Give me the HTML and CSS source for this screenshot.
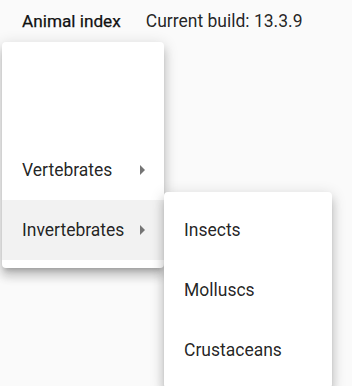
FILE: index.html
```html
<!DOCTYPE html>
<html>
<head>
<meta charset="utf-8">
<link rel="stylesheet" href="styles.css">
</head>
<body>
<header class="bar">
  <span class="title">Animal index</span>
  <span class="build">Current build: 13.3.9</span>
</header>
<div class="menu">
  <div class="spacer"></div>
  <div class="item"><span>Vertebrates</span><span class="arrow"></span></div>
  <div class="item active"><span>Invertebrates</span><span class="arrow"></span>
    <div class="menu sub">
      <div class="item">Insects</div>
      <div class="item">Molluscs</div>
      <div class="item">Crustaceans</div>
    </div>
  </div>
</div>
</body>
</html>
```
FILE: styles.css
```css
html, body {
  margin: 0;
  padding: 0;
  background: #fafafa;
  font-family: Roboto, "Liberation Sans", sans-serif;
  font-size: 17.5px;
  color: rgba(0,0,0,0.87);
  overflow: hidden;
  height: 386px;
}
.bar {
  display: flex;
  align-items: center;
  gap: 25px;
  height: 42px;
  padding-left: 22px;
}
.title {
  font-weight: 400;
  font-size: 17.2px;
  color: #111;
  -webkit-text-stroke: 0.25px #111;
}
.menu {
  margin-left: 2px;
  width: 162px;
  background: #fff;
  border-radius: 4px;
  padding: 8px 0;
  box-shadow: 0 5px 5px -3px rgba(0,0,0,0.2), 0 8px 10px 1px rgba(0,0,0,0.14), 0 3px 14px 2px rgba(0,0,0,0.12);
}
.spacer {
  height: 90px;
}
.item {
  position: relative;
  display: flex;
  align-items: center;
  justify-content: space-between;
  height: 60px;
  padding: 0 20px;
  color: rgba(0,0,0,0.87);
}
.item.active {
  background: #f2f2f2;
}
.arrow {
  width: 0;
  height: 0;
  border-top: 5px solid transparent;
  border-bottom: 5px solid transparent;
  border-left: 5px solid #757575;
  margin-right: -1px;
}
.sub {
  position: absolute;
  left: 162px;
  top: -8px;
  margin-left: 0;
  width: 168px;
  z-index: 2;
}
.sub .item {
  justify-content: flex-start;
}
```
